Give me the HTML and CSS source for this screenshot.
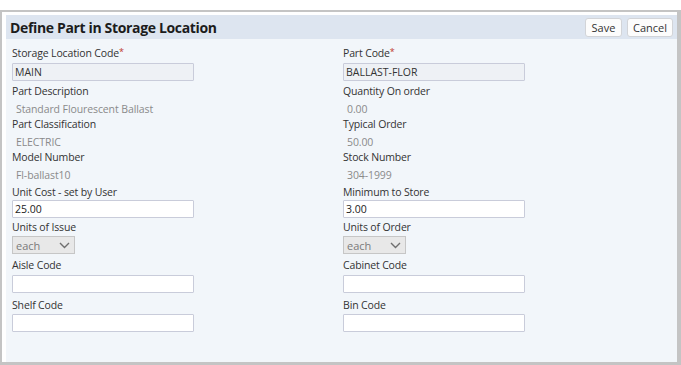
FILE: index.html
```html
<!DOCTYPE html>
<html>
<head>
<meta charset="utf-8">
<link rel="stylesheet" href="styles.css">
</head>
<body>
<div class="frame">
  <div class="panel">
    <div class="header">
      <h1 class="title">Define Part in Storage Location</h1>
      <div class="actions">
        <button class="btn">Save</button>
        <button class="btn">Cancel</button>
      </div>
    </div>
    <div class="form">
      <div class="row r-ro">
        <div class="field">
          <div class="label">Storage Location Code<span class="req">*</span></div>
          <input class="input readonly" value="MAIN" readonly>
        </div>
        <div class="field">
          <div class="label">Part Code<span class="req">*</span></div>
          <input class="input readonly" value="BALLAST-FLOR" readonly>
        </div>
      </div>
      <div class="row r-val">
        <div class="field">
          <div class="label">Part Description</div>
          <div class="value">Standard Flourescent Ballast</div>
        </div>
        <div class="field">
          <div class="label">Quantity On order</div>
          <div class="value">0.00</div>
        </div>
      </div>
      <div class="row r-val">
        <div class="field">
          <div class="label">Part Classification</div>
          <div class="value">ELECTRIC</div>
        </div>
        <div class="field">
          <div class="label">Typical Order</div>
          <div class="value">50.00</div>
        </div>
      </div>
      <div class="row r-val r-val-last">
        <div class="field">
          <div class="label">Model Number</div>
          <div class="value">Fl-ballast10</div>
        </div>
        <div class="field">
          <div class="label">Stock Number</div>
          <div class="value">304-1999</div>
        </div>
      </div>
      <div class="row r-edit">
        <div class="field">
          <div class="label">Unit Cost - set by User</div>
          <input class="input" value="25.00">
        </div>
        <div class="field">
          <div class="label">Minimum to Store</div>
          <input class="input" value="3.00">
        </div>
      </div>
      <div class="row r-sel">
        <div class="field">
          <div class="label">Units of Issue</div>
          <div class="select"><span>each</span><svg class="chev" width="11" height="7" viewBox="0 0 11 7"><path d="M1 1 L5.5 5.5 L10 1" fill="none" stroke="#6f6f6f" stroke-width="1.4"/></svg></div>
        </div>
        <div class="field">
          <div class="label">Units of Order</div>
          <div class="select"><span>each</span><svg class="chev" width="11" height="7" viewBox="0 0 11 7"><path d="M1 1 L5.5 5.5 L10 1" fill="none" stroke="#6f6f6f" stroke-width="1.4"/></svg></div>
        </div>
      </div>
      <div class="row r-code">
        <div class="field">
          <div class="label">Aisle Code</div>
          <input class="input" value="">
        </div>
        <div class="field">
          <div class="label">Cabinet Code</div>
          <input class="input" value="">
        </div>
      </div>
      <div class="row r-code r-last">
        <div class="field">
          <div class="label">Shelf Code</div>
          <input class="input" value="">
        </div>
        <div class="field">
          <div class="label">Bin Code</div>
          <input class="input" value="">
        </div>
      </div>
    </div>
  </div>
</div>
</body>
</html>
```
FILE: styles.css
```css
html, body {
  margin: 0;
  padding: 0;
  background: #ffffff;
}
body {
  font-family: "Open Sans", "Noto Sans", sans-serif;
  color: #333;
  overflow: hidden;
}
.frame {
  margin-top: 10px;
  width: 681px;
  height: 355px;
  box-sizing: border-box;
  border: 2px solid #c4c4c4;
  border-right-width: 4px;
  border-bottom-width: 3px;
  padding: 3px 0 0 4px;
  background: #ffffff;
}
.panel {
  background: #f2f6fa;
  height: 100%;
}
.header {
  height: 24px;
  background: #dde5f0;
  display: flex;
  align-items: center;
  justify-content: space-between;
  padding: 0 4px 0 4px;
}
.title {
  margin: 0;
  font-size: 14px;
  font-weight: 700;
  color: #1c1c1c;
  letter-spacing: -0.35px;
}
.actions {
  display: flex;
  gap: 5px;
}
.btn {
  font-family: inherit;
  font-size: 11px;
  color: #333;
  background: #fcfcfc;
  border: 1px solid #d2d4d8;
  border-radius: 3px;
  height: 19px;
  min-width: 37px;
  padding: 0 5px;
  line-height: 17px;
}
.form {
  padding: 7px 0 0 6px;
}
.row {
  display: grid;
  grid-template-columns: 331px 1fr;
}
.field {
  display: flex;
  flex-direction: column;
  align-items: flex-start;
}
.label {
  font-size: 10.5px;
  line-height: 15px;
  height: 15px;
  color: #333;
  white-space: nowrap;
  letter-spacing: -0.15px;
}
.req {
  color: #c0392b;
  font-size: 9px;
  vertical-align: top;
  position: relative;
  top: -2px;
}
.input {
  box-sizing: border-box;
  width: 182px;
  height: 18px;
  margin: 0;
  border: 1px solid #c9ccda;
  border-radius: 1px;
  background: #ffffff;
  font-family: inherit;
  font-size: 10.5px;
  color: #222;
  padding: 0 2px;
  outline: none;
}
.input.readonly {
  background: #eef1f5;
  color: #333;
}
.value {
  padding: 3px 0 0 4px;
  font-size: 10.5px;
  line-height: 15px;
  height: 15px;
  color: #8a8a8a;
  letter-spacing: -0.1px;
}
.r-ro { margin-bottom: 3px; }
.r-ro .input { margin-top: 2px; }
.r-val-last { margin-bottom: 2px; }
.r-edit { margin-bottom: 2px; }
.r-sel { margin-bottom: 4px; }
.r-sel .select { margin-top: 1px; }
.r-code { margin-bottom: 5px; }
.r-code .input { margin-top: 2px; }
.r-last .input { margin-top: 1px; }
.select {
  box-sizing: border-box;
  width: 63px;
  height: 18px;
  border: 1px solid #c6c6c6;
  background: #e8e8e8;
  display: flex;
  align-items: center;
  justify-content: space-between;
  padding: 0 4px 0 3px;
  font-size: 11px;
  color: #7a7a7a;
}
.chev {
  display: block;
}
```
